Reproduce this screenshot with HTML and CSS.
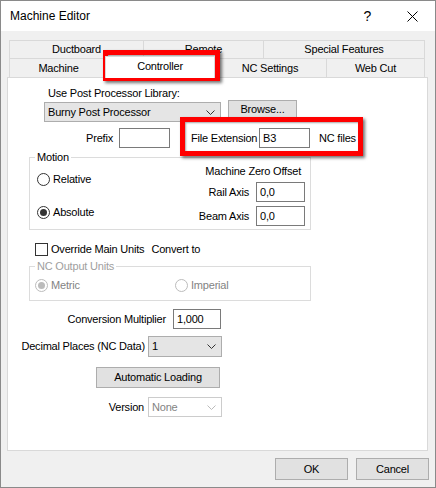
FILE: index.html
```html
<!DOCTYPE html>
<html>
<head>
<meta charset="utf-8">
<link rel="stylesheet" href="styles.css">
</head>
<body>
<div class="window">
  <div class="titlebar">
    <span class="title">Machine Editor</span>
    <span class="tb-btn help">?</span>
    <span class="tb-btn close"><svg width="11" height="11" viewBox="0 0 11 11"><path d="M0.5 0.5L10.5 10.5M10.5 0.5L0.5 10.5" stroke="#000" stroke-width="1" fill="none"/></svg></span>
  </div>
  <div class="client">
    <div class="tabctl">
      <div class="tabrow row1">
        <div class="tab w134">Ductboard</div>
        <div class="tab w120">Remote</div>
        <div class="tab w162 last">Special Features</div>
      </div>
      <div class="tabrow row2">
        <div class="tab w98">Machine</div>
        <div class="tab sel">Controller</div>
        <div class="tab w113">NC Settings</div>
        <div class="tab w99 last">Web Cut</div>
      </div>
      <div class="panel">
        <div class="lib-label">Use Post Processor Library:</div>
        <div class="row-b">
          <div class="combo wide"><span>Burny Post Processor</span><svg class="chev" width="9" height="5" viewBox="0 0 9 5"><path d="M0.5 0.5L4.5 4.5L8.5 0.5" stroke="#333" fill="none"/></svg></div>
          <div class="btn browse">Browse...</div>
        </div>
        <div class="row-c">
          <span class="lbl-prefix">Prefix</span>
          <div class="input in-prefix"></div>
          <span class="lbl-ext">File Extension</span>
          <div class="input in-ext">B3</div>
          <span class="ncfiles">NC files</span>
        </div>
        <fieldset class="group motion">
          <legend>Motion</legend>
          <div class="motion-body">
            <div class="left-col">
              <div class="radio-row"><span class="radio"></span><span>Relative</span></div>
              <div class="radio-row second"><span class="radio on"></span><span>Absolute</span></div>
            </div>
            <div class="right-col">
              <div class="mzo">Machine Zero Offset</div>
              <div class="axis-row"><span>Rail Axis</span><div class="input in-axis">0,0</div></div>
              <div class="axis-row"><span>Beam Axis</span><div class="input in-axis">0,0</div></div>
            </div>
          </div>
        </fieldset>
        <div class="chk-row">
          <span class="checkbox"></span><span class="chk-text">Override Main Units</span><span class="convert">Convert to</span>
        </div>
        <fieldset class="group ncunits">
          <legend>NC Output Units</legend>
          <div class="nc-body">
            <div class="radio-row metric"><span class="radio dis on"></span><span>Metric</span></div>
            <div class="radio-row"><span class="radio dis"></span><span>Imperial</span></div>
          </div>
        </fieldset>
        <div class="form-row conv">
          <span class="lbl lbl-conv">Conversion Multiplier</span>
          <div class="input in-conv">1,000</div>
        </div>
        <div class="form-row dec">
          <span class="lbl lbl-dec">Decimal Places (NC Data)</span>
          <div class="combo small"><span>1</span><svg class="chev" width="9" height="5" viewBox="0 0 9 5"><path d="M0.5 0.5L4.5 4.5L8.5 0.5" stroke="#333" fill="none"/></svg></div>
        </div>
        <div class="btn autoload">Automatic Loading</div>
        <div class="form-row ver">
          <span class="lbl lbl-ver">Version</span>
          <div class="combo small disabled"><span>None</span><svg class="chev" width="9" height="5" viewBox="0 0 9 5"><path d="M0.5 0.5L4.5 4.5L8.5 0.5" stroke="#bbb" fill="none"/></svg></div>
        </div>
      </div>
    </div>
    <div class="footer">
      <div class="btn dlg">OK</div>
      <div class="btn dlg">Cancel</div>
    </div>
  </div>
  <div class="hl hl1"></div>
  <div class="hl hl2"></div>
</div>
</body>
</html>
```

FILE: styles.css
```css
* { box-sizing: border-box; }
html, body { margin: 0; padding: 0; }
body {
  font-family: "Liberation Sans", Arial, sans-serif;
  font-size: 11px;
  letter-spacing: -0.2px;
  color: #000;
  background: #fff;
}
.window {
  position: relative;
  width: 436px;
  height: 488px;
  border: 1px solid #8a8a8a;
  background: #f0f0f0;
  display: flex;
  flex-direction: column;
}
.titlebar {
  height: 30px;
  background: #fff;
  display: flex;
  align-items: center;
}
.title {
  flex: 1;
  font-size: 12px;
  letter-spacing: 0;
  padding-left: 9px;
  padding-bottom: 1px;
}
.tb-btn {
  width: 45px;
  height: 30px;
  display: flex;
  align-items: center;
  justify-content: center;
}
.help { font-size: 14px; letter-spacing: 0; padding-bottom: 1px; }
.client { padding: 9px 0 0 6px; }
.tabctl { width: 421px; }
.tabrow { display: flex; margin-left: 2px; width: 417px; }
.row1 { height: 18px; }
.row2 { height: 19px; align-items: flex-start; }
.tab {
  border-top: 1px solid #d9d9d9;
  border-left: 1px solid #d9d9d9;
  display: flex;
  align-items: center;
  justify-content: center;
  background: #f0f0f0;
  height: 100%;
  padding-bottom: 1px;
}
.row2 .tab { height: 19px; }
.tab.last { border-right: 1px solid #d9d9d9; }
.w134 { width: 134px; }
.w120 { width: 120px; }
.w162 { width: 162px; }
.w98 { width: 98px; }
.w113 { width: 113px; }
.w99 { width: 99px; }
.row2 .tab.sel {
  width: 110px;
  height: 22px;
  margin: -2px -2px 0 -2px;
  background: #fff;
  border-right: 1px solid #d9d9d9;
  position: relative;
  z-index: 1;
  padding-bottom: 3px;
}
.panel {
  width: 421px;
  height: 374px;
  border: 1px solid #d9d9d9;
  background: #fff;
  line-height: 13px;
}
.lib-label { margin: 9px 0 0 40px; height: 13px; }
.row-b {
  display: flex;
  align-items: flex-start;
  margin: 2px 0 0 36px;
  height: 20px;
}
.combo {
  height: 20px;
  background: #e5e5e5;
  border: 1px solid #adadad;
  display: flex;
  align-items: center;
  justify-content: space-between;
  padding-left: 3px;
}
.combo .chev { margin-right: 5px; }
.combo.wide { width: 177px; }
.combo.small { width: 74px; }
.combo.disabled { background: #fff; border-color: #cccccc; color: #838383; }
.btn {
  background: #e1e1e1;
  border: 1px solid #adadad;
  display: flex;
  align-items: center;
  justify-content: center;
}
.browse { margin: -2px 0 0 7px; width: 69px; height: 19px; }
.input {
  height: 20px;
  border: 1px solid #7a7a7a;
  background: #fff;
  padding-left: 3px;
  display: flex;
  align-items: center;
}
.row-c { display: flex; align-items: center; margin-top: 6px; height: 20px; }
.lbl-prefix { width: 105px; text-align: right; }
.in-prefix { margin-left: 6px; width: 51px; }
.lbl-ext { margin-left: 21px; width: 68px; }
.in-ext { width: 51px; }
.ncfiles { margin-left: 9px; }
.group {
  margin: 0 0 0 21px;
  width: 282px;
  padding: 0;
  border: 1px solid #dcdcdc;
}
.group legend {
  margin-left: 5px;
  padding: 0 2px;
  height: 13px;
  line-height: 13px;
}
.motion { margin-top: 3px; height: 79px; padding-right: 5px; }
.motion-body { display: flex; justify-content: space-between; }
.left-col { padding: 9px 0 0 7px; }
.radio-row { display: flex; align-items: center; height: 13px; }
.radio-row .radio { margin-right: 3px; }
.radio-row.second { margin-top: 20px; }
.radio {
  width: 13px;
  height: 13px;
  border: 1px solid #333;
  border-radius: 50%;
  background: #fff;
  display: flex;
  align-items: center;
  justify-content: center;
}
.radio.on::after {
  content: "";
  width: 7px;
  height: 7px;
  border-radius: 50%;
  background: #333;
}
.radio.dis { border-color: #bcbcbc; }
.radio.dis.on::after { background: #bcbcbc; }
.right-col { padding-top: 1px; }
.mzo { height: 13px; text-align: right; padding-right: 4px; }
.axis-row {
  display: flex;
  justify-content: flex-end;
  align-items: center;
  margin-top: 4px;
  height: 20px;
}
.in-axis { margin-left: 7px; width: 49px; }
.chk-row {
  display: flex;
  align-items: center;
  height: 13px;
  margin: 13px 0 0 27px;
}
.checkbox {
  width: 13px;
  height: 13px;
  border: 1px solid #333;
  background: #fff;
}
.chk-text { margin-left: 3px; }
.convert { margin-left: 7px; }
.ncunits { margin-top: 4px; height: 41px; border-color: #dcdcdc; }
.ncunits legend { color: #a0a0a0; }
.nc-body { display: flex; padding: 6px 0 0 5px; color: #838383; }
.metric { width: 140px; }
.form-row { display: flex; align-items: center; }
.lbl { text-align: right; }
.conv { margin-top: 8px; height: 20px; }
.lbl-conv { width: 158px; }
.in-conv { margin-left: 7px; width: 48px; }
.dec { margin-top: 7px; height: 21px; }
.dec .combo { height: 21px; }
.lbl-dec { width: 137px; }
.dec .combo { margin-left: 3px; }
.autoload { margin: 10px 0 0 88px; width: 124px; height: 21px; }
.ver { margin-top: 9px; height: 20px; }
.lbl-ver { width: 136px; }
.ver .combo { margin-left: 4px; }
.footer {
  display: flex;
  justify-content: flex-end;
  gap: 8px;
  margin-top: 7px;
  padding-right: 6px;
}
.dlg { width: 73px; height: 22px; }
.hl {
  position: absolute;
  border: 5px solid #f00;
  box-shadow: 2px 2px 3px rgba(0,0,0,0.55), inset 1px 1px 2px rgba(0,0,0,0.35);
}
.hl1 { left: 102px; top: 49px; width: 117px; height: 31px; }
.hl2 { left: 179px; top: 116px; width: 183px; height: 39px; }
```
